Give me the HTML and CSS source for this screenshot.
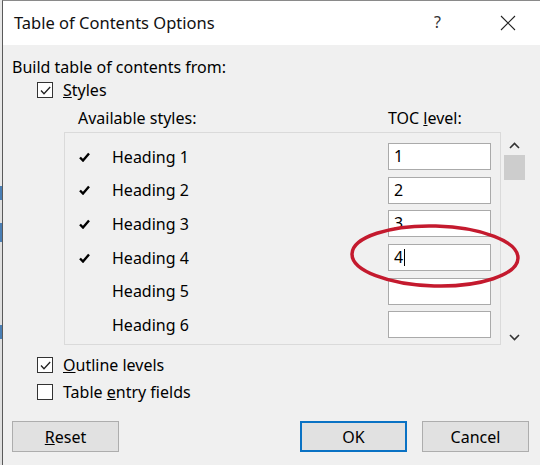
FILE: index.html
```html
<!DOCTYPE html>
<html>
<head>
<meta charset="utf-8">
<link rel="stylesheet" href="styles.css">
</head>
<body>
<div class="screen">
  <div class="behind"></div>
  <div class="dialog">
    <div class="titlebar">
      <span class="title">Table of Contents Options</span>
      <span class="help">?</span>
      <span class="close"><svg width="16" height="16" viewBox="0 0 16 16"><path d="M1 1 L15 15 M15 1 L1 15" stroke="#222" stroke-width="1.1" fill="none"/></svg></span>
    </div>
    <div class="body">
      <div class="group-label">Build table of contents from:</div>
      <div class="check indent">
        <span class="box"><svg width="13" height="13" viewBox="0 0 13 13"><path d="M2 6.5 L5 9.8 L11.2 3" stroke="#222" stroke-width="1.3" fill="none"/></svg></span>
        <span><u>S</u>tyles</span>
      </div>
      <div class="colheads">
        <span class="ch-avail">Available styles:</span>
        <span class="ch-toc">TOC <u>l</u>evel:</span>
      </div>
      <div class="listwrap">
        <div class="list">
          <div class="row"><span class="tick"><svg width="11" height="10" viewBox="0 0 11 10"><path d="M1 5.5 L4 8.5 L10 1.5" stroke="#000" stroke-width="2.4" fill="none"/></svg></span><span class="name">Heading 1</span><span class="lvl">1</span></div>
          <div class="row"><span class="tick"><svg width="11" height="10" viewBox="0 0 11 10"><path d="M1 5.5 L4 8.5 L10 1.5" stroke="#000" stroke-width="2.4" fill="none"/></svg></span><span class="name">Heading 2</span><span class="lvl">2</span></div>
          <div class="row"><span class="tick"><svg width="11" height="10" viewBox="0 0 11 10"><path d="M1 5.5 L4 8.5 L10 1.5" stroke="#000" stroke-width="2.4" fill="none"/></svg></span><span class="name">Heading 3</span><span class="lvl">3</span></div>
          <div class="row"><span class="tick"><svg width="11" height="10" viewBox="0 0 11 10"><path d="M1 5.5 L4 8.5 L10 1.5" stroke="#000" stroke-width="2.4" fill="none"/></svg></span><span class="name">Heading 4</span><span class="lvl">4<span class="caret"></span></span></div>
          <div class="row"><span class="tick"></span><span class="name">Heading 5</span><span class="lvl"></span></div>
          <div class="row"><span class="tick"></span><span class="name">Heading 6</span><span class="lvl"></span></div>
        </div>
        <div class="scrollbar">
          <span class="arrow"><svg width="11" height="7" viewBox="0 0 11 7"><path d="M1 6 L5.5 1.5 L10 6" stroke="#333" stroke-width="1.6" fill="none"/></svg></span>
          <span class="thumb"></span>
          <span class="track"></span>
          <span class="arrow"><svg width="11" height="7" viewBox="0 0 11 7"><path d="M1 1 L5.5 5.5 L10 1" stroke="#333" stroke-width="1.6" fill="none"/></svg></span>
        </div>
      </div>
      <div class="check indent first-bottom">
        <span class="box"><svg width="13" height="13" viewBox="0 0 13 13"><path d="M2 6.5 L5 9.8 L11.2 3" stroke="#222" stroke-width="1.3" fill="none"/></svg></span>
        <span><u>O</u>utline levels</span>
      </div>
      <div class="check indent">
        <span class="box"></span>
        <span>Table <u>e</u>ntry fields</span>
      </div>
      <div class="buttons">
        <span class="btn"><u>R</u>eset</span>
        <span class="spacer"></span>
        <span class="btn default">OK</span>
        <span class="btn">Cancel</span>
      </div>
    </div>
    <svg class="ellipse" width="180" height="72" viewBox="0 0 180 72"><ellipse cx="90" cy="36" rx="83" ry="30" transform="rotate(1.5 90 36)" stroke="#c41a2e" stroke-width="3.5" fill="none"/></svg>
  </div>
</div>
</body>
</html>
```
FILE: styles.css
```css
html, body {
  margin: 0;
  padding: 0;
  background: #f0f0f0;
}
body {
  font-family: "Noto Sans", "Open Sans", sans-serif;
  font-size: 16px;
  color: #000;
}
.screen {
  display: flex;
  width: 540px;
  height: 465px;
  overflow: hidden;
}
.behind {
  width: 2px;
  flex: none;
  background: linear-gradient(#e8e8e8 0 40%, #4a7fb5 40% 43%, #e0e0e0 43% 48%, #4a7fb5 48% 52%, #e0e0e0 52% 70%, #4a7fb5 70% 73%, #e0e0e0 73%);
}
.dialog {
  position: relative;
  flex: 1;
  border-left: 1px solid #5a5a5a;
  border-top: 1px solid #8a8a8a;
  background: #f0f0f0;
}
.titlebar {
  height: 44px;
  background: #fff;
  display: flex;
  align-items: center;
}
.title {
  font-size: 16.5px;
  padding-left: 11px;
  padding-bottom: 2px;
  flex: 1;
  color: #111;
}
.help {
  font-size: 16px;
  color: #333;
  margin-right: 59px;
  padding-bottom: 2px;
}
.close {
  display: flex;
  margin-right: 24px;
}
.body {
  padding-left: 9px;
}
.group-label {
  margin-top: 12px;
  height: 20px;
  line-height: 20px;
}
.check {
  display: flex;
  align-items: center;
  height: 22px;
  margin-top: 2px;
}
.indent {
  padding-left: 25px;
}
.box {
  width: 14px;
  height: 14px;
  border: 1px solid #333;
  background: #fff;
  display: flex;
  align-items: center;
  justify-content: center;
  margin-right: 10px;
  flex: none;
}
.colheads {
  display: flex;
  margin-top: 7px;
  height: 20px;
  line-height: 20px;
}
.ch-avail {
  padding-left: 66px;
  width: 244px;
  flex: none;
}
.ch-toc {
  padding-left: 66px;
}
.listwrap {
  display: flex;
  margin-top: 4px;
  margin-left: 52px;
  height: 213px;
}
.list {
  width: 437px;
  border: 1px solid #dadada;
  background: #f0f0f0;
  padding-top: 7px;
  box-sizing: border-box;
}
.row {
  display: flex;
  align-items: center;
  height: 33.6px;
}
.tick {
  width: 47px;
  padding-left: 14px;
  box-sizing: border-box;
  display: flex;
  flex: none;
}
.name {
  width: 276px;
  flex: none;
}
.lvl {
  width: 103px;
  height: 27px;
  box-sizing: border-box;
  border: 1px solid #aaa;
  background: #fff;
  padding-left: 5px;
  line-height: 25px;
  display: flex;
  align-items: center;
}
.caret {
  width: 1px;
  height: 17px;
  background: #000;
  margin-left: 1px;
}
.scrollbar {
  width: 27px;
  display: flex;
  flex-direction: column;
  align-items: center;
  padding-top: 8px;
  box-sizing: border-box;
}
.arrow {
  height: 10px;
  display: flex;
  align-items: center;
}
.thumb {
  width: 21px;
  height: 25px;
  background: #cdcdcd;
  margin-top: 5px;
}
.track {
  flex: 1;
}
.scrollbar .arrow:last-child {
  margin-bottom: 3px;
}
.first-bottom {
  margin-top: 9px;
}
.check + .check {
  margin-top: 5px;
}
.buttons {
  display: flex;
  margin-top: 18px;
  padding-right: 11px;
}
.btn {
  width: 107px;
  height: 31px;
  box-sizing: border-box;
  border: 1px solid #adadad;
  background: #e1e1e1;
  display: flex;
  align-items: center;
  justify-content: center;
  flex: none;
}
.spacer {
  flex: 1;
}
.btn.default {
  border: 2px solid #0a72c4;
  margin-right: 15px;
}
.ellipse {
  position: absolute;
  left: 342px;
  top: 219px;
}
```
